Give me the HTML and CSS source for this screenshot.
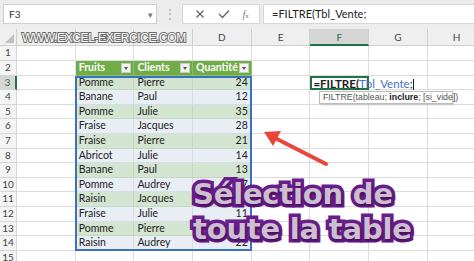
FILE: index.html
```html
<!DOCTYPE html>
<html lang="fr">

<head>
  <meta charset="UTF-8">
  <title>FILTRE - Tbl_Vente</title>
  <link rel="stylesheet" href="styles.css">
</head>

<body>
  <div class="page">

    <div class="ribbon">
      <div class="name-box">
        <span>F3</span>
        <span class="caret">▾</span>
      </div>
      <div class="grip">⋮</div>
      <div class="fx-box">
        <svg width="10" height="10" viewBox="0 0 10 10"><path d="M1.5 1.5 L8.5 8.5 M8.5 1.5 L1.5 8.5" stroke="#666" stroke-width="1.3" /></svg>
        <svg width="12" height="10" viewBox="0 0 12 10"><path d="M1 5 L4.5 8.5 L11 1.5" stroke="#666" stroke-width="1.4" fill="none" /></svg>
        <span class="fx"><i>f</i><small>x</small></span>
      </div>
      <div class="formula">=FILTRE(Tbl_Vente;</div>
    </div>

    <div class="sheet" id="sheet"></div>

    <!-- overlays -->
    <div class="watermark">WWW.EXCEL-EXERCICE.COM</div>

    <div class="tooltip">FILTRE(tableau; <b>inclure</b>; [si_vide])</div>

    <svg class="arrow" width="474" height="261" viewBox="0 0 474 261">
      <line x1="326" y1="164" x2="276" y2="138.5" stroke="#e8463b" stroke-width="4" stroke-linecap="round" />
      <polygon points="264,132 281,131 273,146" fill="#e8463b" />
    </svg>

    <div class="caption">
      <div>Sélection de</div>
      <div>toute la table</div>
    </div>
  </div>

  <script>
    let sheet = document.getElementById('sheet');

    let cols = ['A', 'B', 'C', 'D', 'E', 'F', 'G', 'H'];

    let rows = [
      ['Pomme', 'Pierre', 24],
      ['Banane', 'Paul', 12],
      ['Pomme', 'Julie', 35],
      ['Fraise', 'Jacques', 28],
      ['Fraise', 'Pierre', 21],
      ['Abricot', 'Julie', 14],
      ['Banane', 'Paul', 13],
      ['Pomme', 'Audrey', 17],
      ['Raisin', 'Jacques', 19],
      ['Fraise', 'Julie', 11],
      ['Pomme', 'Pierre', 16],
      ['Raisin', 'Audrey', 22]
    ];

    let cell = (cls, html) => {
      let el = document.createElement('div');
      el.className = 'cell ' + cls;
      if (html !== undefined) el.innerHTML = html;
      sheet.appendChild(el);
      return el;
    };

    // header row
    cell('corner', '<span class="tri"></span>');
    cols.forEach(c => cell('col-head' + (c === 'F' ? ' active' : ''), c));

    let filterBtn = '<span class="filter"></span>';

    for (let r = 1; r <= 15; r++) {
      cell('row-head' + (r === 3 ? ' active' : ''), r);

      cols.forEach((c, i) => {
        if (r === 2 && i >= 1 && i <= 3) {
          let label = ['Fruits', 'Clients', 'Quantité'][i - 1];
          cell('tbl-head', '<span>' + label + '</span>' + filterBtn);
        } else if (r >= 3 && r <= 14 && i >= 1 && i <= 3) {
          let val = rows[r - 3][i - 1];
          let cls = (r % 2 ? 'band' : 'plain') + ' sel';
          if (i === 1) cls += ' sel-l';
          if (i === 3) cls += ' num sel-r';
          if (r === 3) cls += ' sel-t';
          if (r === 14) cls += ' sel-b';
          cell(cls, val);
        } else if (r === 3 && c === 'F') {
          cell('edit', '<span class="fn">=FILTRE(</span><span class="ref">Tbl_Vente</span>;<span class="cursor"></span>');
        } else {
          cell('');
        }
      });
    }
  </script>
</body>

</html>
```

FILE: styles.css
```css
* {
  box-sizing: border-box;
  margin: 0;
  padding: 0;
}

body {
  background: #fff;
  font-family: Lato, 'Liberation Sans', sans-serif;
}

.page {
  width: 474px;
  height: 261px;
  position: relative;
  overflow: hidden;
  background: #fff;
}

/* formula ribbon */

.ribbon {
  height: 29px;
  background: #ececec;
  display: flex;
  align-items: flex-start;
  padding: 4px 0 0 3px;
}

.name-box {
  width: 154px;
  height: 20px;
  background: #fff;
  border: 1px solid #cfcfcf;
  display: flex;
  align-items: center;
  justify-content: space-between;
  padding: 0 3px 0 5px;
  font-size: 10px;
  color: #333;
}

.caret {
  font-size: 9px;
  color: #777;
}

.grip {
  width: 25px;
  text-align: center;
  color: #aaa;
  font-size: 12px;
  line-height: 20px;
}

.fx-box {
  width: 78px;
  height: 20px;
  background: #fff;
  border: 1px solid #d6d6d6;
  display: flex;
  align-items: center;
  justify-content: space-around;
  padding: 0 4px 0 6px;
}

.fx {
  font-family: 'Liberation Serif', serif;
  color: #777;
  font-size: 10px;
}

.fx small {
  font-size: 7px;
}

.formula {
  flex: 1;
  height: 20px;
  margin-left: 3px;
  background: #fff;
  border: 1px solid #d6d6d6;
  border-right: none;
  padding-left: 8px;
  font-size: 11px;
  line-height: 18px;
  color: #222;
}

/* grid */

.sheet {
  display: grid;
  grid-template-columns: 17px repeat(8, 58.7px);
  grid-template-rows: 17px 15px repeat(14, 14.6px);
  font-size: 10.5px;
  color: #222;
}

.cell {
  border-right: 1px solid #dcdcdc;
  border-bottom: 1px solid #dcdcdc;
  line-height: 13.6px;
  padding: 0 3px;
  white-space: nowrap;
  position: relative;
}

.corner {
  background: #efefef;
  border-color: #cfcfcf;
}

.tri {
  position: absolute;
  right: 2px;
  bottom: 2px;
  border-left: 9px solid transparent;
  border-bottom: 9px solid #c0c0c0;
}

.col-head {
  background: #efefef;
  border-color: #cfcfcf;
  text-align: center;
  line-height: 16px;
  color: #444;
  font-size: 10px;
}

.col-head.active {
  background: #d5d5d5;
  border-bottom: 2px solid #217346;
  color: #217346;
}

.row-head {
  background: #f4f4f4;
  border-color: #d6d6d6;
  text-align: center;
  padding: 0;
  color: #444;
  font-size: 10px;
}

.row-head.active {
  background: #d5d5d5;
  border-right: 2px solid #217346;
  color: #217346;
}

.tbl-head {
  background: #70ad47;
  border-color: #8cbf6a;
  color: #fff;
  font-weight: bold;
  display: flex;
  justify-content: space-between;
  align-items: center;
  padding-right: 2px;
}

.filter {
  width: 10px;
  height: 10px;
  background: #f2f2f2;
  border: 1px solid #c9c9c9;
  position: relative;
}

.filter::after {
  content: '';
  position: absolute;
  left: 2px;
  top: 3px;
  border-left: 2.5px solid transparent;
  border-right: 2.5px solid transparent;
  border-top: 3px solid #555;
}

.band {
  background: #d3e4d0;
  border-color: #c3d8c0;
}

.plain {
  background: #e9eef5;
  border-color: #d3dce8;
}

.num {
  text-align: right;
}

/* selection frame around the table body */
.sel::after {
  content: '';
  position: absolute;
  top: 0;
  left: 0;
  right: -1px;
  bottom: -1px;
  border: 0 solid #3a72c2;
  pointer-events: none;
}

.sel-l::after {
  border-left-width: 2px;
  left: -1px;
}

.sel-r::after {
  border-right-width: 2px;
}

.sel-t::after {
  border-top-width: 2px;
}

.sel-b::after {
  border-bottom-width: 2px;
}

.edit {
  border: 2px solid #217346;
  font-size: 11.5px;
  line-height: 11px;
  padding-left: 1px;
  z-index: 2;
  background: #fff;
}

.fn {
  font-weight: bold;
}

.ref {
  color: #4472c4;
}

.cursor {
  display: inline-block;
  width: 1px;
  height: 11px;
  background: #222;
  vertical-align: -2px;
}

/* overlays */

.watermark {
  position: absolute;
  left: 22px;
  top: 31px;
  font-family: 'Liberation Sans', sans-serif;
  font-size: 12px;
  letter-spacing: -0.4px;
  color: #fff;
  -webkit-text-stroke: 2px #6d6d6d;
  paint-order: stroke fill;
}

.tooltip {
  position: absolute;
  left: 319px;
  top: 91px;
  width: 134px;
  height: 13px;
  background: #fff;
  border: 1px solid #bdbdbd;
  box-shadow: 1px 1px 2px rgba(0, 0, 0, .15);
  font-family: 'Liberation Sans', sans-serif;
  font-size: 8.8px;
  line-height: 11px;
  color: #555;
  padding-left: 3px;
  white-space: nowrap;
  z-index: 3;
}

.tooltip b {
  color: #222;
}

.arrow {
  position: absolute;
  left: 0;
  top: 0;
  pointer-events: none;
}

.caption {
  position: absolute;
  left: 193px;
  top: 177px;
  font-family: 'DejaVu Sans', sans-serif;
  font-weight: bold;
  font-size: 29px;
  line-height: 35px;
  letter-spacing: -0.2px;
  color: #cbbfd0;
  -webkit-text-stroke: 7px #6a1d8c;
  paint-order: stroke fill;
  text-shadow: 1px 2px 3px rgba(40, 0, 50, .6);
  white-space: nowrap;
}
```
